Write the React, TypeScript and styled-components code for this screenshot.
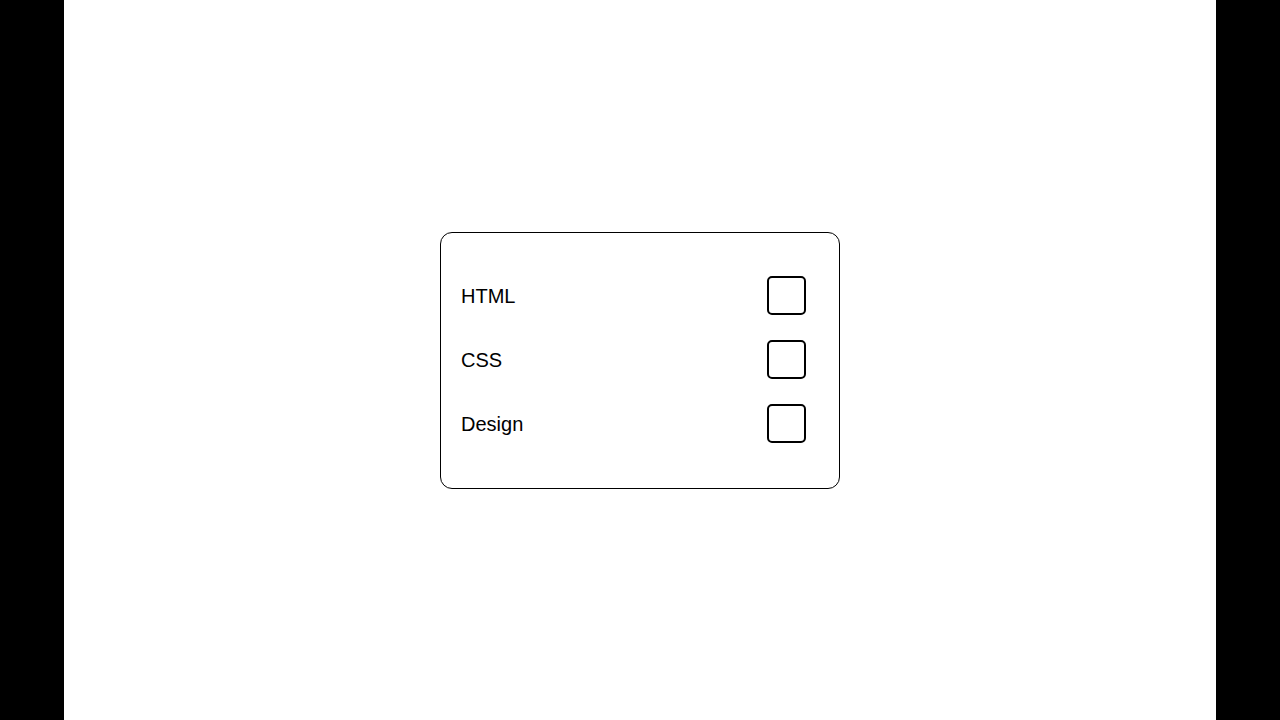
import React from 'react';
import styled, { createGlobalStyle } from 'styled-components';

const GlobalStyle = createGlobalStyle`
    html, body {
        margin: 0;
        padding: 0;
        background: #000;
        font-family: "Liberation Sans", Arial, sans-serif;
    }
`;

const Stage = styled.main`
    width: 1152px;
    height: 720px;
    margin: 0 auto;
    background: #fff;
    display: flex;
    align-items: center;
    justify-content: center;
`;

const Card = styled.section`
    box-sizing: border-box;
    width: 400px;
    padding: 31px 33px 32px 20px;
    border: 1.5px solid #000;
    border-radius: 12px;
    display: flex;
    flex-direction: column;
`;

const Row = styled.label`
    height: 64px;
    display: flex;
    align-items: center;
    justify-content: space-between;
    font-size: 20px;
    color: #000;
    cursor: pointer;
`;

const Label = styled.span`
    padding-top: 2px;
`;

const Box = styled.input.attrs({ type: 'checkbox' })`
    appearance: none;
    box-sizing: border-box;
    width: 39px;
    height: 39px;
    margin: 0;
    border: 2px solid #000;
    border-radius: 5px;
    background: #fff;
    cursor: pointer;

    &:checked {
        background: #000;
    }
`;

const topics = ['HTML', 'CSS', 'Design'];

export default function App() {
    return (
        <>
            <GlobalStyle />
            <Stage>
                <Card>
                    {topics.map(t => (
                        <Row key={t}>
                            <Label>{t}</Label>
                            <Box />
                        </Row>
                    ))}
                </Card>
            </Stage>
        </>
    );
}
